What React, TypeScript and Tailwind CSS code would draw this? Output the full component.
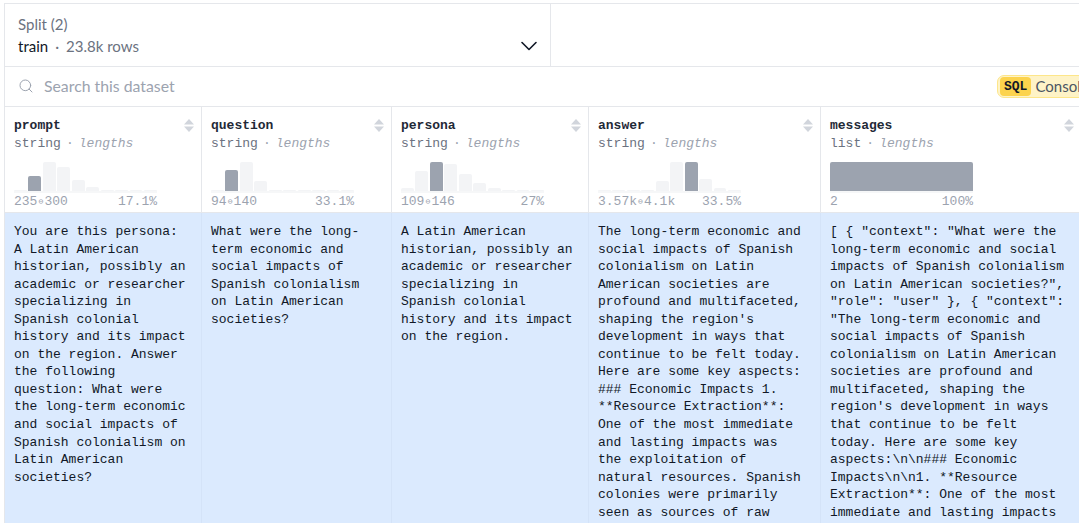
import { ChevronDown, Search } from 'lucide-react'

const mono = "font-['Liberation_Mono',monospace]"

const columns = [
	{
		name: 'prompt',
		type: 'string',
		bars: [1, 15, 29, 24, 11, 4, 1, 1, 1, 1],
		active: 1,
		range: ['235', '300'],
		pct: '17.1%',
		text: 'You are this persona: A Latin American historian, possibly an academic or researcher specializing in Spanish colonial history and its impact on the region. Answer the following question: What were the long-term economic and social impacts of Spanish colonialism on Latin American societies?',
	},
	{
		name: 'question',
		type: 'string',
		bars: [1, 21, 29, 10, 1, 1, 1, 1, 1, 1],
		active: 1,
		range: ['94', '140'],
		pct: '33.1%',
		text: 'What were the long-term economic and social impacts of Spanish colonialism on Latin American societies?',
	},
	{
		name: 'persona',
		type: 'string',
		bars: [3, 20, 29, 27, 17, 8, 3, 1, 1, 1],
		active: 2,
		range: ['109', '146'],
		pct: '27%',
		text: 'A Latin American historian, possibly an academic or researcher specializing in Spanish colonial history and its impact on the region.',
	},
	{
		name: 'answer',
		type: 'string',
		bars: [1, 1, 1, 1, 10, 29, 29, 12, 3, 1],
		active: 6,
		range: ['3.57k', '4.1k'],
		pct: '33.5%',
		text: "The long-term economic and social impacts of Spanish colonialism on Latin American societies are profound and multifaceted, shaping the region's development in ways that continue to be felt today. Here are some key aspects: ### Economic Impacts 1. **Resource Extraction**: One of the most immediate and lasting impacts was the exploitation of natural resources. Spanish colonies were primarily seen as sources of raw materials for the Spanish crown and economy.",
	},
	{
		name: 'messages',
		type: 'list',
		bars: [29],
		active: 0,
		range: ['2'],
		pct: '100%',
		text: '[ { "context": "What were the long-term economic and social impacts of Spanish colonialism on Latin American societies?", "role": "user" }, { "context": "The long-term economic and social impacts of Spanish colonialism on Latin American societies are profound and multifaceted, shaping the region\'s development in ways that continue to be felt today. Here are some key aspects:\\n\\n### Economic Impacts\\n\\n1. **Resource Extraction**: One of the most immediate and lasting impacts of Spanish colonialism was the exploitation',
	},
]

function SortIcon() {
	return (
		<svg width="10" height="13" viewBox="0 0 10 13" className="fill-gray-300">
			<path d="M5 0 L10 5.5 L0 5.5 Z" />
			<path d="M5 13 L0 7.5 L10 7.5 Z" />
		</svg>
	)
}

function Histogram({ bars, active }: { bars: number[]; active: number }) {
	return (
		<div className="flex h-[31px] w-[143px] items-end gap-[1.6px] border-b-2 border-[#f6f7f8]">
			{bars.map((h, i) => (
				<div
					key={i}
					className={`flex-1 rounded-t-[2px] ${i === active ? 'bg-[#9ca3af]' : 'bg-[#f3f4f6]'}`}
					style={{ height: h }}
				/>
			))}
		</div>
	)
}

export default function App() {
	return (
		<div className="h-[523px] w-[1079px] overflow-hidden bg-white pl-1 pt-[3px] font-['Lato',sans-serif]">
			<div className="w-[1200px] border-l border-t border-[#e5e7eb]">
				<div className="flex h-[63px] border-b border-[#e5e7eb]">
					<div className="flex w-[546px] items-end justify-between border-r border-[#e5e7eb] pb-[8px] pl-[13px] pr-[7px]">
						<div>
							<div className="text-[15px] leading-[20px] text-[#6b7280]">Split (2)</div>
							<div className="text-[15px] leading-[24px] text-[#6b7280]">
								<span className="text-[#111827]">train</span>
								<span className="mx-[7px]">·</span>
								23.8k rows
							</div>
						</div>
						<ChevronDown size={28} strokeWidth={1.4} className="mb-[-2px] text-[#111827]" />
					</div>
				</div>
				<div className="flex h-[40px] items-center border-b border-[#e5e7eb] pb-px pl-[13px]">
					<div className="flex w-[979px] items-center">
						<Search size={16} strokeWidth={1.5} className="text-[#9ca3af]" />
						<span className="ml-[10px] text-[15.8px] leading-[20px] text-[#9ca3af]">Search this dataset</span>
					</div>
					<div className="flex h-[23px] items-center rounded-[7px] border border-[#fde68a] bg-[#fef3c7] pl-[2px]">
						<span className={`rounded-[4px] bg-[#fcd34d] px-[4px] text-[13px] font-bold leading-[19px] text-[#111827] ${mono}`}>SQL</span>
						<span className="ml-[4px] text-[15px] text-[#4b5563]">Console</span>
					</div>
				</div>
				<div className="grid grid-cols-[197px_190px_197px_232px_260px]">
					{columns.map((col, i) => (
						<div key={col.name} className={`flex h-[106px] flex-col border-b border-[#e5e7eb] pl-[9px] pr-[7px] pt-[10px] ${i < 4 ? 'border-r' : ''} ${mono}`}>
							<div className="flex items-start justify-between">
								<div className="text-[13px] font-bold leading-[18px] text-[#1f2937]">{col.name}</div>
								<div className="mt-[2px]">
									<SortIcon />
								</div>
							</div>
							<div className="flex text-[13px] leading-[18px] text-[#6b7280]">
								{col.type}
								<span className="w-[18px] text-center text-[#9ca3af]">·</span>
								<span className="italic text-[#9ca3af]">lengths</span>
							</div>
							<div className="mt-[9px]">
								<Histogram bars={col.bars} active={col.active} />
							</div>
							<div className="flex w-[143px] justify-between text-[13px] leading-[18px] text-[#9ca3af]">
								<span className="flex items-center">
									{col.range[0]}
									{col.range[1] && <span className="w-[7px] text-center text-[8px]">⊖</span>}
									{col.range[1]}
								</span>
								<span>{col.pct}</span>
							</div>
						</div>
					))}
					{columns.map((col, i) => (
						<div key={col.name} className={`h-[320px] bg-[#dbeafe] pl-[9px] pr-[14px] pt-[10px] text-[13px] leading-[17.55px] text-[#111827] ${i < 4 ? 'border-r border-[#d4e3f8]' : ''} ${mono}`}>
							{col.text}
						</div>
					))}
				</div>
			</div>
		</div>
	)
}
